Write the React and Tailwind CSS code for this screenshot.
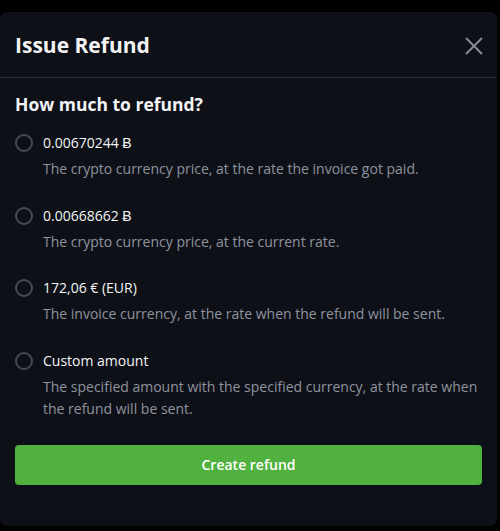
import React from "react";

const options = [
  { label: "0.00670244 Ƀ", desc: "The crypto currency price, at the rate the invoice got paid." },
  { label: "0.00668662 Ƀ", desc: "The crypto currency price, at the current rate." },
  { label: "172,06 € (EUR)", desc: "The invoice currency, at the rate when the refund will be sent." },
  { label: "Custom amount", desc: "The specified amount with the specified currency, at the rate when the refund will be sent." },
];

export default function App() {
  return (
    <div className="w-[500px] h-[531px] bg-black pt-[12px] pr-[3px] pb-[5px]" style={{ fontFamily: '"Open Sans", sans-serif' }}>
      <div className="h-full bg-[#0e1018] rounded-[7px] flex flex-col">
        <div className="h-[66px] flex items-center justify-between px-[15px] pt-[2px] border-b border-[#2a2d35]">
          <h1 className="text-[21px] font-bold text-[#f3f4f6] leading-none">Issue Refund</h1>
          <svg width="18" height="18" viewBox="0 0 18 18" className="mr-[-1px]">
            <path d="M1 1 L17 17 M17 1 L1 17" stroke="#8a8e97" strokeWidth="1.8" fill="none" />
          </svg>
        </div>
        <div className="px-[15px] pt-[15px]">
          <h2 className="text-[17.5px] font-bold text-[#f3f4f6] leading-[22px]">How much to refund?</h2>
          <div className="mt-[17px] flex flex-col gap-[24.5px]">
            {options.map((o) => (
              <div key={o.label} className="flex gap-[10px]">
                <div className="w-[18px] h-[18px] rounded-full border-2 border-[#464a52] shrink-0 mt-[2px]" />
                <div className="flex flex-col">
                  <div className="text-[14px] leading-[21px] text-[#f3f4f6]">{o.label}</div>
                  <div className="mt-[5px] text-[14px] leading-[22px] text-[#8e949e]">{o.desc}</div>
                </div>
              </div>
            ))}
          </div>
          <button className="mt-[25px] w-full h-[40px] rounded-[4px] bg-[#51b13e] text-white text-[14px] font-semibold">
            Create refund
          </button>
        </div>
      </div>
    </div>
  );
}
